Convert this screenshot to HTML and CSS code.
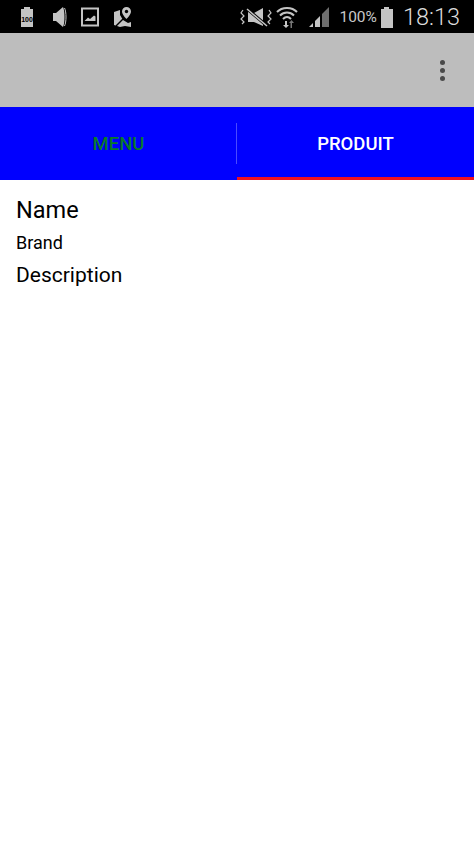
FILE: index.html
```html
<!DOCTYPE html>
<html lang="en">
<head>
    <meta charset="UTF-8">
    <title>Produit</title>
    <link rel="stylesheet" href="styles.css">
</head>
<body>
<div class="statusbar">
    <div class="status-left">
        <svg class="icon" width="16" height="22" viewBox="0 0 16 22">
            <path d="M5 1h6v2h3v18H2V3h3z" fill="#c4c4c4"/>
            <text x="8" y="16" text-anchor="middle" class="batt-text">100</text>
        </svg>
        <svg class="icon icon-speaker" width="15" height="24" viewBox="0 0 15 24">
            <path d="M1 8h3l7-6c2 4 2 16 0 20l-7-6H1z" fill="#c4c4c4"/>
            <path d="M12.500 3c2 4 2 14 0 18" fill="none" stroke="#c4c4c4" stroke-width="1"/>
        </svg>
        <svg class="icon" width="18" height="20" viewBox="0 0 18 20">
            <rect x="1" y="1.500" width="16" height="17" fill="none" stroke="#c4c4c4" stroke-width="2"/>
            <path d="M3.500 14l3.500-3.500 2 1.500 4-3.500 1.500 1v4.500z" fill="#c4c4c4"/>
        </svg>
        <svg class="icon" width="19" height="22" viewBox="0 0 19 22">
            <path d="M1 6l6-2v5l3 5 5 3 3-1v5l-6-1-5 1-6-2z" fill="#c4c4c4"/>
            <path d="M3 20l7-7" stroke="#000" stroke-width="1.500"/>
            <path d="M13.500 1a4.500 4.500 0 0 1 4.500 4.500c0 3-4.500 7.500-4.500 7.500S9 8.500 9 5.500A4.500 4.500 0 0 1 13.500 1z" fill="#c4c4c4"/>
            <circle cx="13.500" cy="5.500" r="1.700" fill="#000"/>
        </svg>
    </div>
    <div class="status-right">
        <svg class="icon" width="32" height="20" viewBox="0 0 32 20">
            <path d="M8 5l6 1 9-5v18l-9-4H8z" fill="#c4c4c4"/>
            <path d="M6 1l20 17" stroke="#000" stroke-width="3"/>
            <path d="M7 2l20 17" stroke="#c4c4c4" stroke-width="1.500"/>
            <path d="M3 3L1 6l3 3-3 3 3 3-2 2M29 3l2 3-3 3 3 3-3 3 2 2" fill="none" stroke="#c4c4c4" stroke-width="1.200"/>
        </svg>
        <svg class="icon icon-wifi" width="22" height="24" viewBox="0 0 22 24">
            <path d="M1 7c5-5.500 15-5.500 20 0M4 10.500c4-4 10-4 14 0M7 14c2.500-2.500 5.500-2.500 8 0" fill="none" stroke="#c4c4c4" stroke-width="2"/>
            <path d="M9 16h2v4h2l-3 3-3-3h2z" fill="#c4c4c4"/>
            <path d="M14.500 23v-5h-1.500l2.500-3 2.500 3H16v5z" fill="#777"/>
        </svg>
        <svg class="icon icon-signal" width="22" height="22" viewBox="0 0 22 22">
            <path d="M21 1v20h-7V8z" fill="#6e6e6e"/>
            <path d="M12 10v11H7v-6z" fill="#c4c4c4"/>
            <path d="M5 17v4H1z" fill="#c4c4c4"/>
        </svg>
        <span class="percent">100%</span>
        <svg class="icon icon-battery" width="14" height="22" viewBox="0 0 14 22">
            <path d="M4 1h5v2h4v19H1V3h3z" fill="#c4c4c4"/>
        </svg>
        <span class="clock">18:13</span>
    </div>
</div>

<div class="actionbar">
    <div class="overflow">
        <span class="dot"></span>
        <span class="dot"></span>
        <span class="dot"></span>
    </div>
</div>

<div class="tabs">
    <div class="tab tab-menu">MENU</div>
    <div class="tab tab-active">PRODUIT</div>
</div>

<div class="content">
    <div class="name">Name</div>
    <div class="brand">Brand</div>
    <div class="description">Description</div>
</div>
</body>
</html>
```

FILE: styles.css
```css
* {
    box-sizing: border-box;
}

html, body {
    height: 100%;
}

body {
    margin: 0;
    background-color: #fff;
    font-family: Roboto, "Liberation Sans", sans-serif;
    overflow: hidden;
}

.statusbar {
    height: 33px;
    background-color: #000;
    display: flex;
    justify-content: space-between;
    align-items: center;
    padding: 0 14px 0 19px;
    color: #c8c8c8;
}

.status-left, .status-right {
    display: flex;
    align-items: center;
}

.status-left {
    gap: 14px;
}

.icon {
    display: block;
}

.icon-speaker {
    margin-left: 3px;
}

.batt-text {
    font-family: "Liberation Sans", sans-serif;
    font-size: 7px;
    font-weight: bold;
    fill: #000;
}

.icon-wifi {
    margin-left: 4px;
}

.icon-signal {
    margin-left: 10px;
}

.percent {
    margin-left: 9px;
    font-size: 15.5px;
}

.icon-battery {
    margin-left: 3px;
}

.clock {
    margin-left: 9px;
    font-size: 23.5px;
    font-weight: 300;
    color: #dcdcdc;
}

.actionbar {
    height: 74px;
    background-color: #bdbdbd;
    display: flex;
    justify-content: flex-end;
    align-items: center;
    padding-right: 29px;
}

.overflow {
    display: flex;
    flex-direction: column;
    gap: 3px;
}

.dot {
    width: 5px;
    height: 5px;
    border-radius: 50%;
    background-color: #4a4a4a;
}

.tabs {
    height: 73px;
    background-color: #0000ff;
    display: flex;
    align-items: stretch;
    font-size: 18.5px;
    font-weight: 500;
}

.tab {
    flex: 1;
    display: flex;
    align-items: center;
    justify-content: center;
    position: relative;
}

.tab-menu {
    color: #0a7a2a;
}

.tab-menu::after {
    content: "";
    position: absolute;
    right: 0;
    top: 16px;
    bottom: 16px;
    width: 1px;
    background-color: #4a4aff;
}

.tab-active {
    color: #fff;
    border-bottom: 3px solid #f01020;
    padding-top: 3px;
}

.content {
    padding: 14px 16px 0;
    color: #000;
}

.name {
    font-size: 23.5px;
    line-height: 32px;
}

.brand {
    font-size: 18px;
    line-height: 24px;
    margin-top: 5px;
}

.description {
    font-size: 21px;
    line-height: 28px;
    margin-top: 6px;
}
```
